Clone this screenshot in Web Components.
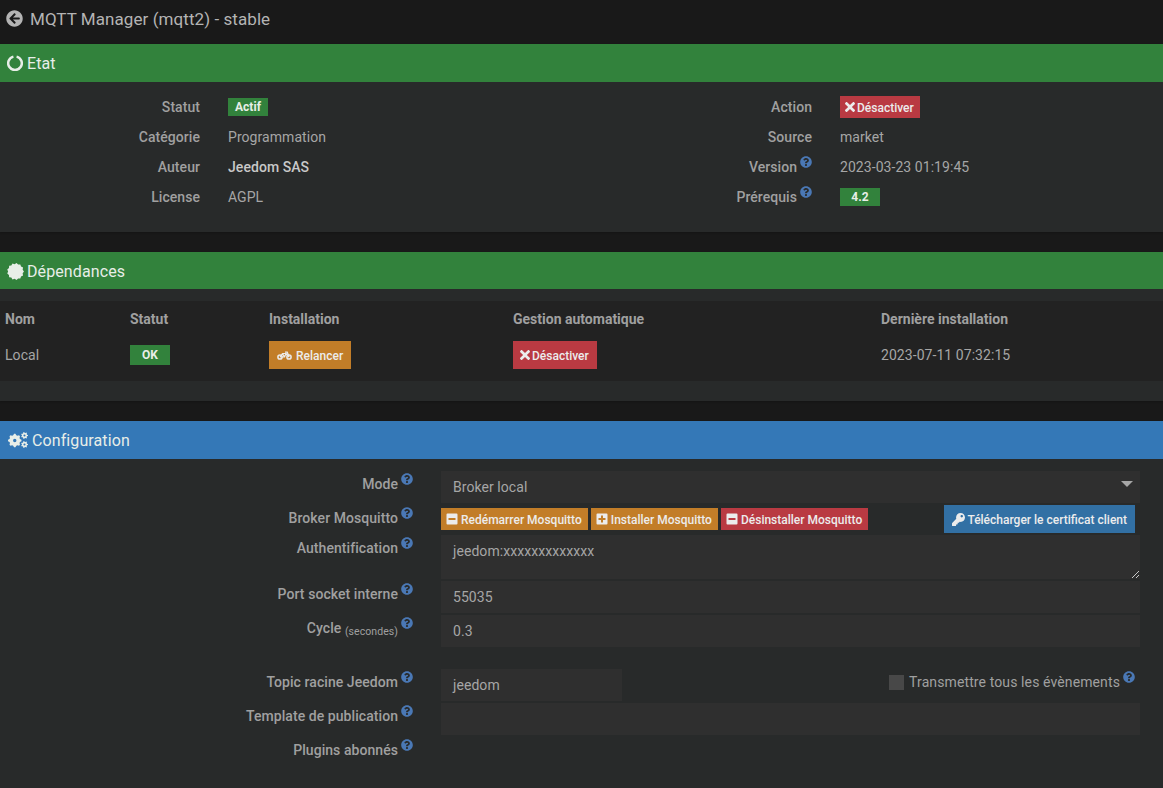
<!DOCTYPE html>
<html lang="fr"><head><meta charset="utf-8"><title>MQTT Manager</title>
<style>
html,body{margin:0;padding:0;background:#191919;height:788px;overflow:hidden}
body{font:14px/20px Roboto,"Liberation Sans",sans-serif;color:#a6a6a6;letter-spacing:.06px}
</style></head><body>
<jd-page>
  <jd-title>MQTT Manager (mqtt2) - stable</jd-title>

  <jd-panel color="#32823c" icon="notch" heading="Etat">
    <jd-kvgrid>
      <jd-kv slot="left" label="Statut"><jd-badge>Actif</jd-badge></jd-kv>
      <jd-kv slot="left" label="Catégorie">Programmation</jd-kv>
      <jd-kv slot="left" label="Auteur"><strong>Jeedom SAS</strong></jd-kv>
      <jd-kv slot="left" label="License">AGPL</jd-kv>
      <jd-kv slot="right" label="Action"><jd-btn color="#b93a42" icon="times">Désactiver</jd-btn></jd-kv>
      <jd-kv slot="right" label="Source">market</jd-kv>
      <jd-kv slot="right" label="Version" help>2023-03-23 01:19:45</jd-kv>
      <jd-kv slot="right" label="Prérequis" help><jd-badge>4.2</jd-badge></jd-kv>
    </jd-kvgrid>
  </jd-panel>

  <jd-panel color="#32823c" icon="certificate" heading="Dépendances" hh="37">
    <jd-deps></jd-deps>
  </jd-panel>

  <jd-panel color="#3478b7" icon="cogs" heading="Configuration" last>
    <jd-form>
      <jd-row label="Mode" help><jd-field select>Broker local</jd-field></jd-row>
      <jd-row label="Broker Mosquitto" help h="28">
        <jd-actions>
          <jd-btn slot="start" color="#c27d28" icon="minus" small>Redémarrer Mosquitto</jd-btn>
          <jd-btn slot="start" color="#c27d28" icon="plus" small>Installer Mosquitto</jd-btn>
          <jd-btn slot="start" color="#b93a42" icon="minus" small>Désinstaller Mosquitto</jd-btn>
          <jd-btn slot="end" color="#3270a4" icon="key" tall>Télécharger le certificat client</jd-btn>
        </jd-actions>
      </jd-row>
      <jd-row label="Authentification" help h="44"><jd-field area>jeedom:xxxxxxxxxxxxx</jd-field></jd-row>
      <jd-row label="Port socket interne" help><jd-field>55035</jd-field></jd-row>
      <jd-row label="Cycle" note="(secondes)" help spaced><jd-field>0.3</jd-field></jd-row>
      <jd-row label="Topic racine Jeedom" help>
        <jd-split>
          <jd-field style="width:181px">jeedom</jd-field>
          <jd-check slot="end">Transmettre tous les évènements</jd-check>
        </jd-split>
      </jd-row>
      <jd-row label="Template de publication" help><jd-field></jd-field></jd-row>
      <jd-row label="Plugins abonnés" help></jd-row>
    </jd-form>
  </jd-panel>
</jd-page>
<script>
function gear(cx,cy,rO,rI,teeth,hole){
  let d='';const n=teeth*4;
  for(let i=0;i<n;i++){
    const a=(i/n)*Math.PI*2-Math.PI/n/1;
    const r=(i%4<2)?rO:rI;
    d+=(i?'L':'M')+(cx+r*Math.cos(a)).toFixed(2)+' '+(cy+r*Math.sin(a)).toFixed(2);
  }
  d+='Z';
  if(hole)d+=`M${cx-hole} ${cy}a${hole} ${hole} 0 1 0 ${hole*2} 0a${hole} ${hole} 0 1 0 ${-hole*2} 0Z`;
  return d;
}
function scallop(cx,cy,rO,rI,n){
  let d='';
  for(let i=0;i<n*2;i++){
    const a=i/(n*2)*Math.PI*2, r=i%2?rI:rO;
    d+=(i?'L':'M')+(cx+r*Math.cos(a)).toFixed(2)+' '+(cy+r*Math.sin(a)).toFixed(2);
  }
  return d+'Z';
}
const ICONS={
  back:{w:512,h:512,d:'M256 504C119 504 8 393 8 256S119 8 256 8s248 111 248 248-111 248-248 248zm28.9-143.6L209.4 288H392c13.3 0 24-10.7 24-24v-16c0-13.3-10.7-24-24-24H209.4l75.5-72.4c9.7-9.3 9.9-24.8.4-34.3l-11-10.9c-9.4-9.4-24.6-9.4-33.9 0L107.7 239c-9.4 9.4-9.4 24.6 0 33.9l132.7 132.7c9.4 9.4 24.6 9.4 33.9 0l11-10.9c9.5-9.5 9.3-25-.4-34.3z'},
  help:{w:512,h:512,d:'M504 256c0 136.997-111.043 248-248 248S8 392.997 8 256C8 119.083 119.043 8 256 8s248 111.083 248 248zM262.655 90c-54.497 0-89.255 22.957-116.549 63.758-3.536 5.286-2.353 12.415 2.715 16.258l34.699 26.31c5.205 3.947 12.621 3.008 16.665-2.122 17.864-22.658 30.113-35.797 57.303-35.797 20.429 0 45.698 13.148 45.698 32.958 0 14.976-12.363 22.667-32.534 33.976C247.128 238.528 216 254.941 216 296v4c0 6.627 5.373 12 12 12h56c6.627 0 12-5.373 12-12v-1.333c0-28.462 83.186-29.647 83.186-106.667 0-58.002-60.165-102-116.531-102zM256 338c-25.365 0-46 20.635-46 46 0 25.364 20.635 46 46 46s46-20.636 46-46c0-25.365-20.635-46-46-46z'},
  times:{w:352,h:352,y:80,d:'M242.72 256l100.07-100.07c12.28-12.28 12.28-32.19 0-44.48l-22.24-22.24c-12.28-12.28-32.19-12.28-44.48 0L176 189.28 75.93 89.21c-12.28-12.28-32.19-12.28-44.48 0L9.21 111.45c-12.28 12.28-12.28 32.19 0 44.48L109.28 256 9.21 356.07c-12.28 12.28-12.28 32.19 0 44.48l22.24 22.24c12.28 12.28 32.2 12.28 44.48 0L176 322.72l100.07 100.07c12.28 12.28 32.2 12.28 44.48 0l22.24-22.24c12.28-12.28 12.28-32.19 0-44.48L242.72 256z'},
  key:{w:512,h:512,d:'M512 176.001C512 273.203 433.202 352 336 352c-11.22 0-22.19-1.062-32.827-3.069l-24.012 27.014A23.999 23.999 0 0 1 261.223 384H224v40c0 13.255-10.745 24-24 24h-40v40c0 13.255-10.745 24-24 24H24c-13.255 0-24-10.745-24-24v-78.059c0-6.365 2.529-12.47 7.029-16.971l161.802-161.802C163.108 213.814 160 195.271 160 176 160 78.798 238.797.001 335.999 0 433.488-.001 512 78.511 512 176.001zM336 128c0 26.51 21.49 48 48 48s48-21.49 48-48-21.49-48-48-48-48 21.49-48 48z'},
  minus:{w:24,h:24,d:'M3 1h18a2 2 0 0 1 2 2v18a2 2 0 0 1-2 2H3a2 2 0 0 1-2-2V3a2 2 0 0 1 2-2zM5 10v4h14v-4z'},
  plus:{w:24,h:24,d:'M3 1h18a2 2 0 0 1 2 2v18a2 2 0 0 1-2 2H3a2 2 0 0 1-2-2V3a2 2 0 0 1 2-2zM10 5v5H5v4h5v5h4v-5h5v-4h-5V5z'},
  certificate:{w:24,h:24,d:scallop(12,12,12,10.4,13)},
  cogs:{w:40,h:32,d:gear(13.5,17,13.5,10.9,8,3.4)+gear(33,7,7,5.2,7,2.1)+gear(33,25,7,5.2,7,2.1)},
  bike:{w:30,h:18,raw:'<g fill="none" stroke="currentColor"><circle cx="6" cy="12" r="4.2" stroke-width="3"/><circle cx="24" cy="12" r="4.2" stroke-width="3"/><path d="M6 12l5-7h7l6 7M11 5l4 7h-9M15 12l3-7" stroke-width="2.4" stroke-linejoin="round"/><path d="M16 2.2h4.5l3.5 9.8" stroke-width="2.6"/></g>'},
  notch:{w:16,h:16,raw:'<path d="M9.6 1.6A6.8 6.8 0 1 1 6.4 1.6" fill="none" stroke="currentColor" stroke-width="2.5"/>'}
};
function icon(name,w,h){
  const i=ICONS[name];
  const inner=i.raw||`<path fill="currentColor" fill-rule="evenodd" d="${i.d}"/>`;
  return `<svg xmlns="http://www.w3.org/2000/svg" width="${w}" height="${h}" viewBox="0 ${i.y||0} ${i.w} ${i.h}" aria-hidden="true" style="display:block;flex:none">${inner}</svg>`;
}
function define(name,css,html,extra){
  customElements.define(name,class extends HTMLElement{
    constructor(){super();this.attachShadow({mode:'open'});}
    connectedCallback(){
      this.shadowRoot.innerHTML=`<style>${css}</style>`+(typeof html==='function'?html(this):html);
      if(extra)extra(this);
    }
  });
}
const HELP=`<span style="display:block;margin:-1px 0 0 3px;color:#4a78b5;align-self:flex-start">${icon('help',12,12)}</span>`;

define('jd-page',':host{display:block;width:1163px}','<slot></slot>');

define('jd-title',`:host{display:flex;align-items:center;height:44px;box-sizing:border-box;padding:0 0 7px 6px;gap:7px;background:#191919;color:#b4b4b4;font-size:17px;font-weight:400;letter-spacing:.07px}`,
  ()=>`${icon('back',17,17)}<slot></slot>`);

define('jd-panel',`:host{display:block;background:#282a2a;margin-bottom:20px;box-shadow:0 1px 2px rgba(0,0,0,.2)}
  :host([last]){margin-bottom:0;min-height:367px}
  :host([hh]) header{padding-top:1px}
  header{display:flex;align-items:center;box-sizing:border-box;height:38px;padding-left:7px;color:#e8eee8;font-size:16px;letter-spacing:.1px}
  header span{padding-top:1px}`,
  h=>{
    const c=h.getAttribute('color'),ic=h.getAttribute('icon');
    const cfg={notch:[16,16,4,7],certificate:[17,17,3,7],cogs:[20,16,4,8]}[ic];
    const hh=h.getAttribute('hh')||38;
    return `<header style="background:${c};height:${hh}px;padding-left:${cfg[3]}px;gap:${cfg[2]}px">${icon(ic,cfg[0],cfg[1])}<span>${h.getAttribute('heading')}</span></header><slot></slot>`;
  });

define('jd-kvgrid',`:host{display:grid;grid-template-columns:612px 1fr;padding:10px 0 20px}
  div{display:grid;grid-auto-rows:30px}`,`<div><slot name="left"></slot></div><div><slot name="right"></slot></div>`);

define('jd-kv',`:host{display:grid;grid-template-columns:200px 1fr;column-gap:28px;align-items:center;height:30px}
  .l{display:flex;justify-content:flex-end;font-weight:500;color:#a0a0a0}
  ::slotted(strong){font-weight:500;color:#c8c8c8}
  .v{display:flex;align-items:center}`,
  h=>`<div class="l"><span>${h.getAttribute('label')}</span>${h.hasAttribute('help')?HELP:''}</div><div class="v"><slot></slot></div>`);

define('jd-badge',`:host{display:inline-flex;align-items:center;justify-content:center;width:40px;height:18px;background:#32823c;color:#e8eee8;font-size:12px;font-weight:700}
  :host([lg]){height:20px}`,'<slot></slot>');

define('jd-btn',`:host{display:inline-flex;align-items:center;gap:2px;box-sizing:border-box;height:22px;padding:1px 6px 0 5px;color:#ececec;font-size:12px;font-weight:500;letter-spacing:0;white-space:nowrap}
  :host([tall]){height:28px;padding:1px 8px 0;gap:2px}
  :host([small]){padding:1px 6px 0 5px;gap:3px}
  svg{margin-top:-1px}`,
  h=>{
    h.style.background=h.getAttribute('color');
    const ic=h.getAttribute('icon');
    const sz={times:[10,10],bike:[15,9],key:[13,13],minus:[12,12],plus:[12,12]}[ic];
    return icon(ic,sz[0],sz[1])+'<slot></slot>';
  });

define('jd-deps',`:host{display:block;padding:12px 0 20px}
  .t{display:grid;grid-template-columns:125px 139px 244px 368px 1fr;background:#222;grid-template-rows:36px 36px;padding-bottom:8px}
  .t>div{display:flex;align-items:center;padding:0 5px}
  .h{font-weight:700;color:#a0a0a0;letter-spacing:0}
  jd-btn{height:28px;padding:1px 8px 0 7px;}
  jd-btn[icon=bike]{padding-left:8px;gap:4px}`,
  ()=>`<div class="t">
    <div class="h">Nom</div><div class="h">Statut</div><div class="h">Installation</div><div class="h">Gestion automatique</div><div class="h">Dernière installation</div>
    <div>Local</div><div><jd-badge lg>OK</jd-badge></div>
    <div><jd-btn color="#c27d28" icon="bike">Relancer</jd-btn></div>
    <div><jd-btn color="#b93a42" icon="times">Désactiver</jd-btn></div>
    <div>2023-07-11 07:32:15</div>
  </div>`);

define('jd-form',`:host{display:grid;row-gap:2px;padding:12px 0 0}`,'<slot></slot>');

define('jd-row',`:host{display:grid;grid-template-columns:413px 699px;column-gap:28px;min-height:32px}
  :host([spaced]){margin-bottom:20px}
  .l{display:flex;justify-content:flex-end;padding-top:3px;font-weight:500;color:#a0a0a0;box-sizing:border-box}
  small{font-size:10.5px;font-weight:400;vertical-align:-2px}`,
  h=>{
    if(h.getAttribute('h')) h.style.minHeight=h.getAttribute('h')+'px';
    const note=h.getAttribute('note');
    return `<div class="l"><span>${h.getAttribute('label')}${note?` <small>${note}</small>`:''}</span>${h.hasAttribute('help')?HELP:''}</div><div><slot></slot></div>`;
  });

define('jd-field',`:host{display:flex;align-items:center;box-sizing:border-box;height:32px;padding:0 12px;background:#2f2f2f;color:#a6a6a6;position:relative}
  :host([area]){height:44px;align-items:flex-start;padding-top:6px}
  .arrow{position:absolute;right:7px;top:10px;width:0;height:0;border:6px solid transparent;border-top:6px solid #a6a6a6;border-bottom:0}
  svg{position:absolute;right:0;bottom:0}`,
  h=>`<slot></slot>${h.hasAttribute('select')?'<i class="arrow"></i>':''}${h.hasAttribute('area')?'<svg width="9" height="9" viewBox="0 0 9 9"><path d="M1 8L8 1M5 8L8 5" stroke="#c8c8c8" stroke-width="1" fill="none"/></svg>':''}`);

define('jd-actions',`:host{display:flex;align-items:center;justify-content:space-between;height:28px;padding-right:5px}
  .s{display:flex;gap:3px}`,`<div class="s"><slot name="start"></slot></div><slot name="end"></slot>`);

define('jd-split',`:host{display:flex;justify-content:space-between;height:32px;padding-right:5px}`,'<slot></slot><slot name="end"></slot>');

define('jd-check',`:host{display:flex;align-items:flex-start;color:#a0a0a0;padding-top:3px;letter-spacing:.11px}
  i{display:block;width:15px;height:15px;background:#484848;margin:3px 5px 0 0}`,
  ()=>`<i></i><span><slot></slot></span>${HELP}`);
</script>
</body></html>
